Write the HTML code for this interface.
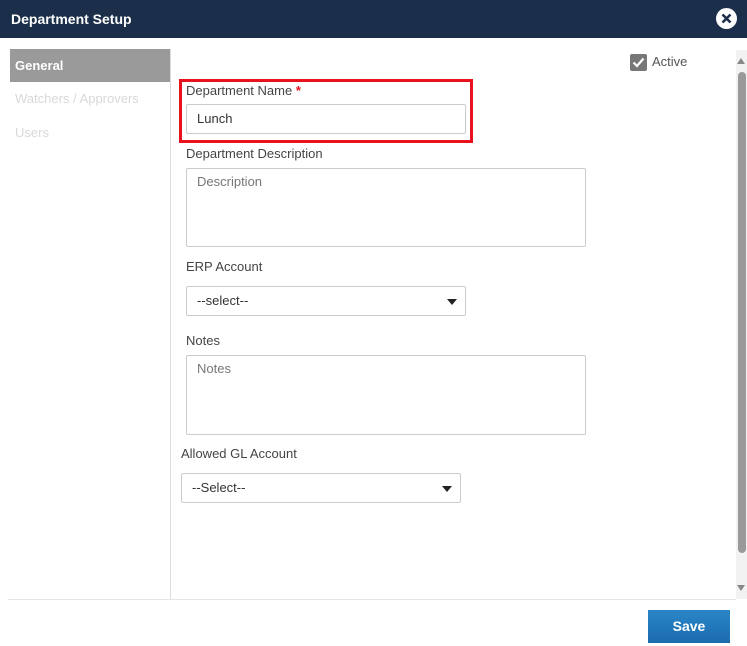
<!DOCTYPE html>
<html><head><style>
*{box-sizing:border-box;margin:0;padding:0}
body{width:747px;height:646px;background:#fff;font-family:"Liberation Sans",sans-serif;position:relative;overflow:hidden;color:#444}
.hdr{position:absolute;left:0;top:0;width:747px;height:38px;background:#1b2f4a;color:#fff;font-weight:bold;font-size:14px;line-height:38px;padding-left:11px}
.x{position:absolute;right:10px;top:8px;width:21px;height:21px;border-radius:50%;background:#fff}
.side{position:absolute;left:10px;top:49px;width:160px}
.side div{height:34px;line-height:34px;padding-left:5px;font-size:13px;color:#d8d8d8}
.side .on{background:#9a9a9a;color:#fff;font-weight:bold;height:33px}
.vline{position:absolute;left:170px;top:49px;width:1px;height:550px;background:#ddd}
.lbl{position:absolute;font-size:13px;color:#444}
.inp{position:absolute;border:1px solid #ccc;border-radius:2px;font-size:13px;padding-left:10px;color:#333;background:#fff}
.ph{color:#777}
.arr{position:absolute;right:8px;top:12px;border-left:5px solid transparent;border-right:5px solid transparent;border-top:6px solid #222}
.red{position:absolute;left:179px;top:79px;width:294px;height:64px;border:3px solid #e8111c}
.sb{position:absolute;left:736px;top:50px;width:11px;height:549px;background:#f2f2f2}
.thumb{position:absolute;left:738px;top:72px;width:8px;height:481px;background:#999;border-radius:4px}
.foot{position:absolute;left:8px;top:599px;width:728px;height:1px;background:#e5e5e5}
.save{position:absolute;left:648px;top:610px;width:82px;height:33px;background:linear-gradient(#2a86c8,#1b6cad);color:#fff;font-weight:bold;font-size:14px;text-align:center;line-height:33px}
</style></head><body>
<div class="hdr">Department Setup</div>
<div class="x"><svg width="21" height="21"><path d="M6.5 6.5L14.5 14.5M14.5 6.5L6.5 14.5" stroke="#1b2f4a" stroke-width="2.6"/></svg></div>
<div class="side"><div class="on">General</div><div>Watchers / Approvers</div><div>Users</div></div>
<div class="vline"></div>
<div style="position:absolute;left:630px;top:54px;width:17px;height:17px;background:#777;border-radius:2px"><svg width="17" height="17"><path d="M3.5 8.5L7 12L13.5 4.5" stroke="#fff" stroke-width="2.2" fill="none"/></svg></div>
<div class="lbl" style="left:652px;top:54px;color:#555">Active</div>
<div class="red"></div>
<div class="lbl" style="left:186px;top:83px">Department Name <span style="color:#e8111c;font-weight:bold">*</span></div>
<div class="inp" style="left:186px;top:104px;width:280px;height:30px;line-height:28px">Lunch</div>
<div class="lbl" style="left:186px;top:146px">Department Description</div>
<div class="inp ph" style="left:186px;top:168px;width:400px;height:79px;padding-top:5px">Description</div>
<div class="lbl" style="left:186px;top:259px">ERP Account</div>
<div class="inp" style="left:186px;top:286px;width:280px;height:30px;line-height:28px">--select--<div class="arr"></div></div>
<div class="lbl" style="left:186px;top:333px">Notes</div>
<div class="inp ph" style="left:186px;top:355px;width:400px;height:80px;padding-top:5px">Notes</div>
<div class="lbl" style="left:181px;top:446px">Allowed GL Account</div>
<div class="inp" style="left:181px;top:473px;width:280px;height:30px;line-height:28px">--Select--<div class="arr"></div></div>
<div class="sb"></div><div class="thumb"></div>
<div style="position:absolute;left:737px;top:58px;border-left:4.5px solid transparent;border-right:4.5px solid transparent;border-bottom:6px solid #888"></div>
<div style="position:absolute;left:737px;top:585px;border-left:4.5px solid transparent;border-right:4.5px solid transparent;border-top:6px solid #888"></div>
<div class="foot"></div>
<div class="save">Save</div>
</body></html>
